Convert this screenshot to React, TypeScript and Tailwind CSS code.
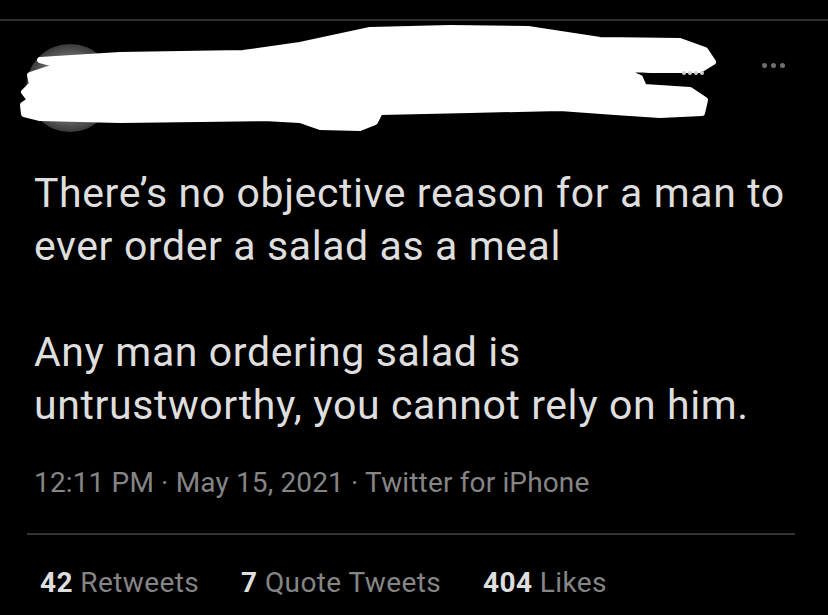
import React from "react";

function Redaction() {
  return (
    <svg width="730" height="120" viewBox="0 21 730 120" className="block">
      <defs>
        <radialGradient id="av" cx="0.5" cy="0.5" r="0.5">
          <stop offset="0" stopColor="#9a9a9a" />
          <stop offset="0.7" stopColor="#6a6a6a" />
          <stop offset="1" stopColor="#3a3a3a" />
        </radialGradient>
      </defs>
      <circle cx="70" cy="88" r="44" fill="url(#av)" />
      <path
        d="M40 60 L120 55 L243 53 L300 45 L370 30 L450 28 L528 29 L600 40 L680 41 L705 50 L713 62 L700 70 L650 70 L618 68 L640 78 L644 87 L690 90 L705 100 L702 113 L660 115 L615 112 L560 108 L470 110 L380 112 L375 122 L360 128 L320 127 L300 120 L264 118 L200 119 L120 120 L40 118 L24 114 L23 105 L30 100 L24 92 L32 84 L30 75 L45 70 L62 66 Z"
        fill="#ffffff"
        stroke="#ffffff"
        strokeWidth="6"
        strokeLinejoin="round"
      />
      <g fill="#cfcfcf">
        <circle cx="684" cy="73" r="2" />
        <circle cx="690" cy="73" r="2" />
        <circle cx="696" cy="73" r="2" />
        <circle cx="702" cy="73" r="2" />
      </g>
    </svg>
  );
}

export default function App() {
  return (
    <div
      className="w-[828px] h-[615px] bg-black overflow-hidden text-[#dedede]"
      style={{ fontFamily: "Roboto, 'Liberation Sans', sans-serif" }}
    >
      <div className="h-[19px]" />
      <div className="h-[2px] bg-[#2e2e2e]" />
      <div className="flex items-start justify-between h-[146px]">
        <Redaction />
        <div className="flex gap-[4px] mt-[42px] mr-[43px]">
          <span className="w-[5px] h-[5px] rounded-full bg-[#6f6f6f]" />
          <span className="w-[5px] h-[5px] rounded-full bg-[#6f6f6f]" />
          <span className="w-[5px] h-[5px] rounded-full bg-[#6f6f6f]" />
        </div>
      </div>
      <div className="pl-[34px] text-[41px] leading-[53px] tracking-[0.6px] whitespace-nowrap">
        <div>There’s no objective reason for a man to</div>
        <div>ever order a salad as a meal</div>
        <div className="h-[53px]" />
        <div>Any man ordering salad is</div>
        <div>untrustworthy, you cannot rely on him.</div>
      </div>
      <div className="pl-[34px] mt-[34px] text-[28px] leading-[34px] tracking-[0.15px] text-[#858585] whitespace-nowrap">
        12:11 PM · May 15, 2021 · Twitter for iPhone
      </div>
      <div className="ml-[27px] mr-[33px] mt-[33px] h-[2px] bg-[#333333]" />
      <div className="flex gap-[42px] pl-[40px] mt-[31px] text-[28px] leading-[34px] tracking-[0.4px] text-[#858585] whitespace-nowrap">
        <span>
          <b className="text-[#dedede] font-bold">42</b> Retweets
        </span>
        <span>
          <b className="text-[#dedede] font-bold">7</b> Quote Tweets
        </span>
        <span>
          <b className="text-[#dedede] font-bold">404</b> Likes
        </span>
      </div>
    </div>
  );
}
